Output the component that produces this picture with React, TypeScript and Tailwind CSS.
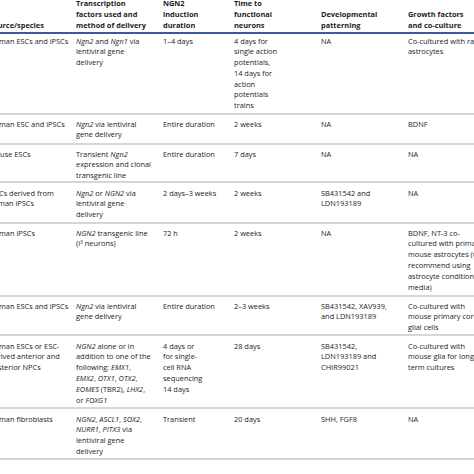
import React from "react";

const cols = "grid grid-cols-[87px_87px_71px_87px_87px_130px]";

const I = ({ children }: { children: React.ReactNode }) => <i>{children}</i>;

type Row = { h: string; pt: string; cells: React.ReactNode[] };

const rows: Row[] = [
  {
    h: "h-[80.5px]",
    pt: "pt-[1.5px]",
    cells: [
      "Human ESCs and iPSCs",
      <>
        <I>Ngn2</I> and <I>Ngn1</I> via
        <br />
        lentiviral gene
        <br />
        delivery
      </>,
      "1–4 days",
      <>
        4 days for
        <br />
        single action
        <br />
        potentials,
        <br />
        14 days for
        <br />
        action
        <br />
        potentials
        <br />
        trains
      </>,
      "NA",
      <>
        Co-cultured with rat
        <br />
        astrocytes
      </>,
    ],
  },
  {
    h: "h-[30.5px]",
    pt: "pt-[4px]",
    cells: [
      "Human ESC and iPSCs",
      <>
        <I>Ngn2</I> via lentiviral
        <br />
        gene delivery
      </>,
      "Entire duration",
      "2 weeks",
      "NA",
      "BDNF",
    ],
  },
  {
    h: "h-[38px]",
    pt: "pt-[3.6px]",
    cells: [
      "Mouse ESCs",
      <>
        Transient <I>Ngn2</I>
        <br />
        expression and clonal
        <br />
        transgenic line
      </>,
      "Entire duration",
      "7 days",
      "NA",
      "NA",
    ],
  },
  {
    h: "h-[41px]",
    pt: "pt-[4.6px]",
    cells: [
      <>
        NPCs derived from
        <br />
        human iPSCs
      </>,
      <>
        <I>Ngn2</I> or <I>NGN2</I> via
        <br />
        lentiviral gene
        <br />
        delivery
      </>,
      "2 days–3 weeks",
      "2 weeks",
      <>
        SB431542 and
        <br />
        LDN193189
      </>,
      "NA",
    ],
  },
  {
    h: "h-[73px]",
    pt: "pt-[3.6px]",
    cells: [
      "Human iPSCs",
      <>
        <I>NGN2</I> transgenic line
        <br />
        (i<sup className="text-[5px]">3</sup> neurons)
      </>,
      "72 h",
      "2 weeks",
      "NA",
      <>
        BDNF, NT-3 co-
        <br />
        cultured with primary
        <br />
        mouse astrocytes (we
        <br />
        recommend using
        <br />
        astrocyte conditioned
        <br />
        media)
      </>,
    ],
  },
  {
    h: "h-[39px]",
    pt: "pt-[3.6px]",
    cells: [
      "Human ESCs and iPSCs",
      <>
        <I>Ngn2</I> via lentiviral
        <br />
        gene delivery
      </>,
      "Entire duration",
      "2–3 weeks",
      <>
        SB431542, XAV939,
        <br />
        and LDN193189
      </>,
      <>
        Co-cultured with
        <br />
        mouse primary cortical
        <br />
        glial cells
      </>,
    ],
  },
  {
    h: "h-[73px]",
    pt: "pt-[4.6px]",
    cells: [
      <>
        Human ESCs or ESC-
        <br />
        derived anterior and
        <br />
        posterior NPCs
      </>,
      <>
        <I>NGN2</I> alone or in
        <br />
        addition to one of the
        <br />
        following: <I>EMX1</I>,
        <br />
        <I>EMX2</I>, <I>OTX1</I>, <I>OTX2</I>,
        <br />
        <I>EOMES</I> (TBR2), <I>LHX2</I>,
        <br />
        or <I>FOXG1</I>
      </>,
      <>
        4 days or
        <br />
        for single-
        <br />
        cell RNA
        <br />
        sequencing
        <br />
        14 days
      </>,
      "28 days",
      <>
        SB431542,
        <br />
        LDN193189 and
        <br />
        CHIR99021
      </>,
      <>
        Co-cultured with
        <br />
        mouse glia for long-
        <br />
        term cultures
      </>,
    ],
  },
  {
    h: "h-[51px]",
    pt: "pt-[4.6px]",
    cells: [
      "Human fibroblasts",
      <>
        <I>NGN2</I>, <I>ASCL1</I>, <I>SOX2</I>,
        <br />
        <I>NURR1</I>, <I>PITX3</I> via
        <br />
        lentiviral gene
        <br />
        delivery
      </>,
      "Transient",
      "20 days",
      "SHH, FGF8",
      "NA",
    ],
  },
];

const header = [
  "Source/species",
  <>
    Transcription
    <br />
    factors used and
    <br />
    method of delivery
  </>,
  <>
    NGN2
    <br />
    induction
    <br />
    duration
  </>,
  <>
    Time to
    <br />
    functional
    <br />
    neurons
  </>,
  <>
    Developmental
    <br />
    patterning
  </>,
  <>
    Growth factors
    <br />
    and co-culture
  </>,
];

export default function App() {
  return (
    <div className="w-[474px] h-[474px] overflow-hidden bg-white text-[#1c1c1c] font-['Open_Sans',Arial,sans-serif] font-medium text-[7.4px] leading-[10.8px]">
      <div className="ml-[-11px] mt-[-2px] w-[549px]">
        <div className={`${cols} h-[36px] border-b-2 border-[#3b5a9e] font-bold items-end pb-[1.6px]`}>
          {header.map((h, i) => (
            <div key={i} className="whitespace-nowrap">
              {h}
            </div>
          ))}
        </div>
        {rows.map((r, i) => (
          <div key={i} className={`${cols} ${r.h} ${r.pt} border-b-2 border-[#d6d6d6] items-start`}>
            {r.cells.map((c, j) => (
              <div key={j} className="whitespace-nowrap">
                {c}
              </div>
            ))}
          </div>
        ))}
      </div>
    </div>
  );
}
